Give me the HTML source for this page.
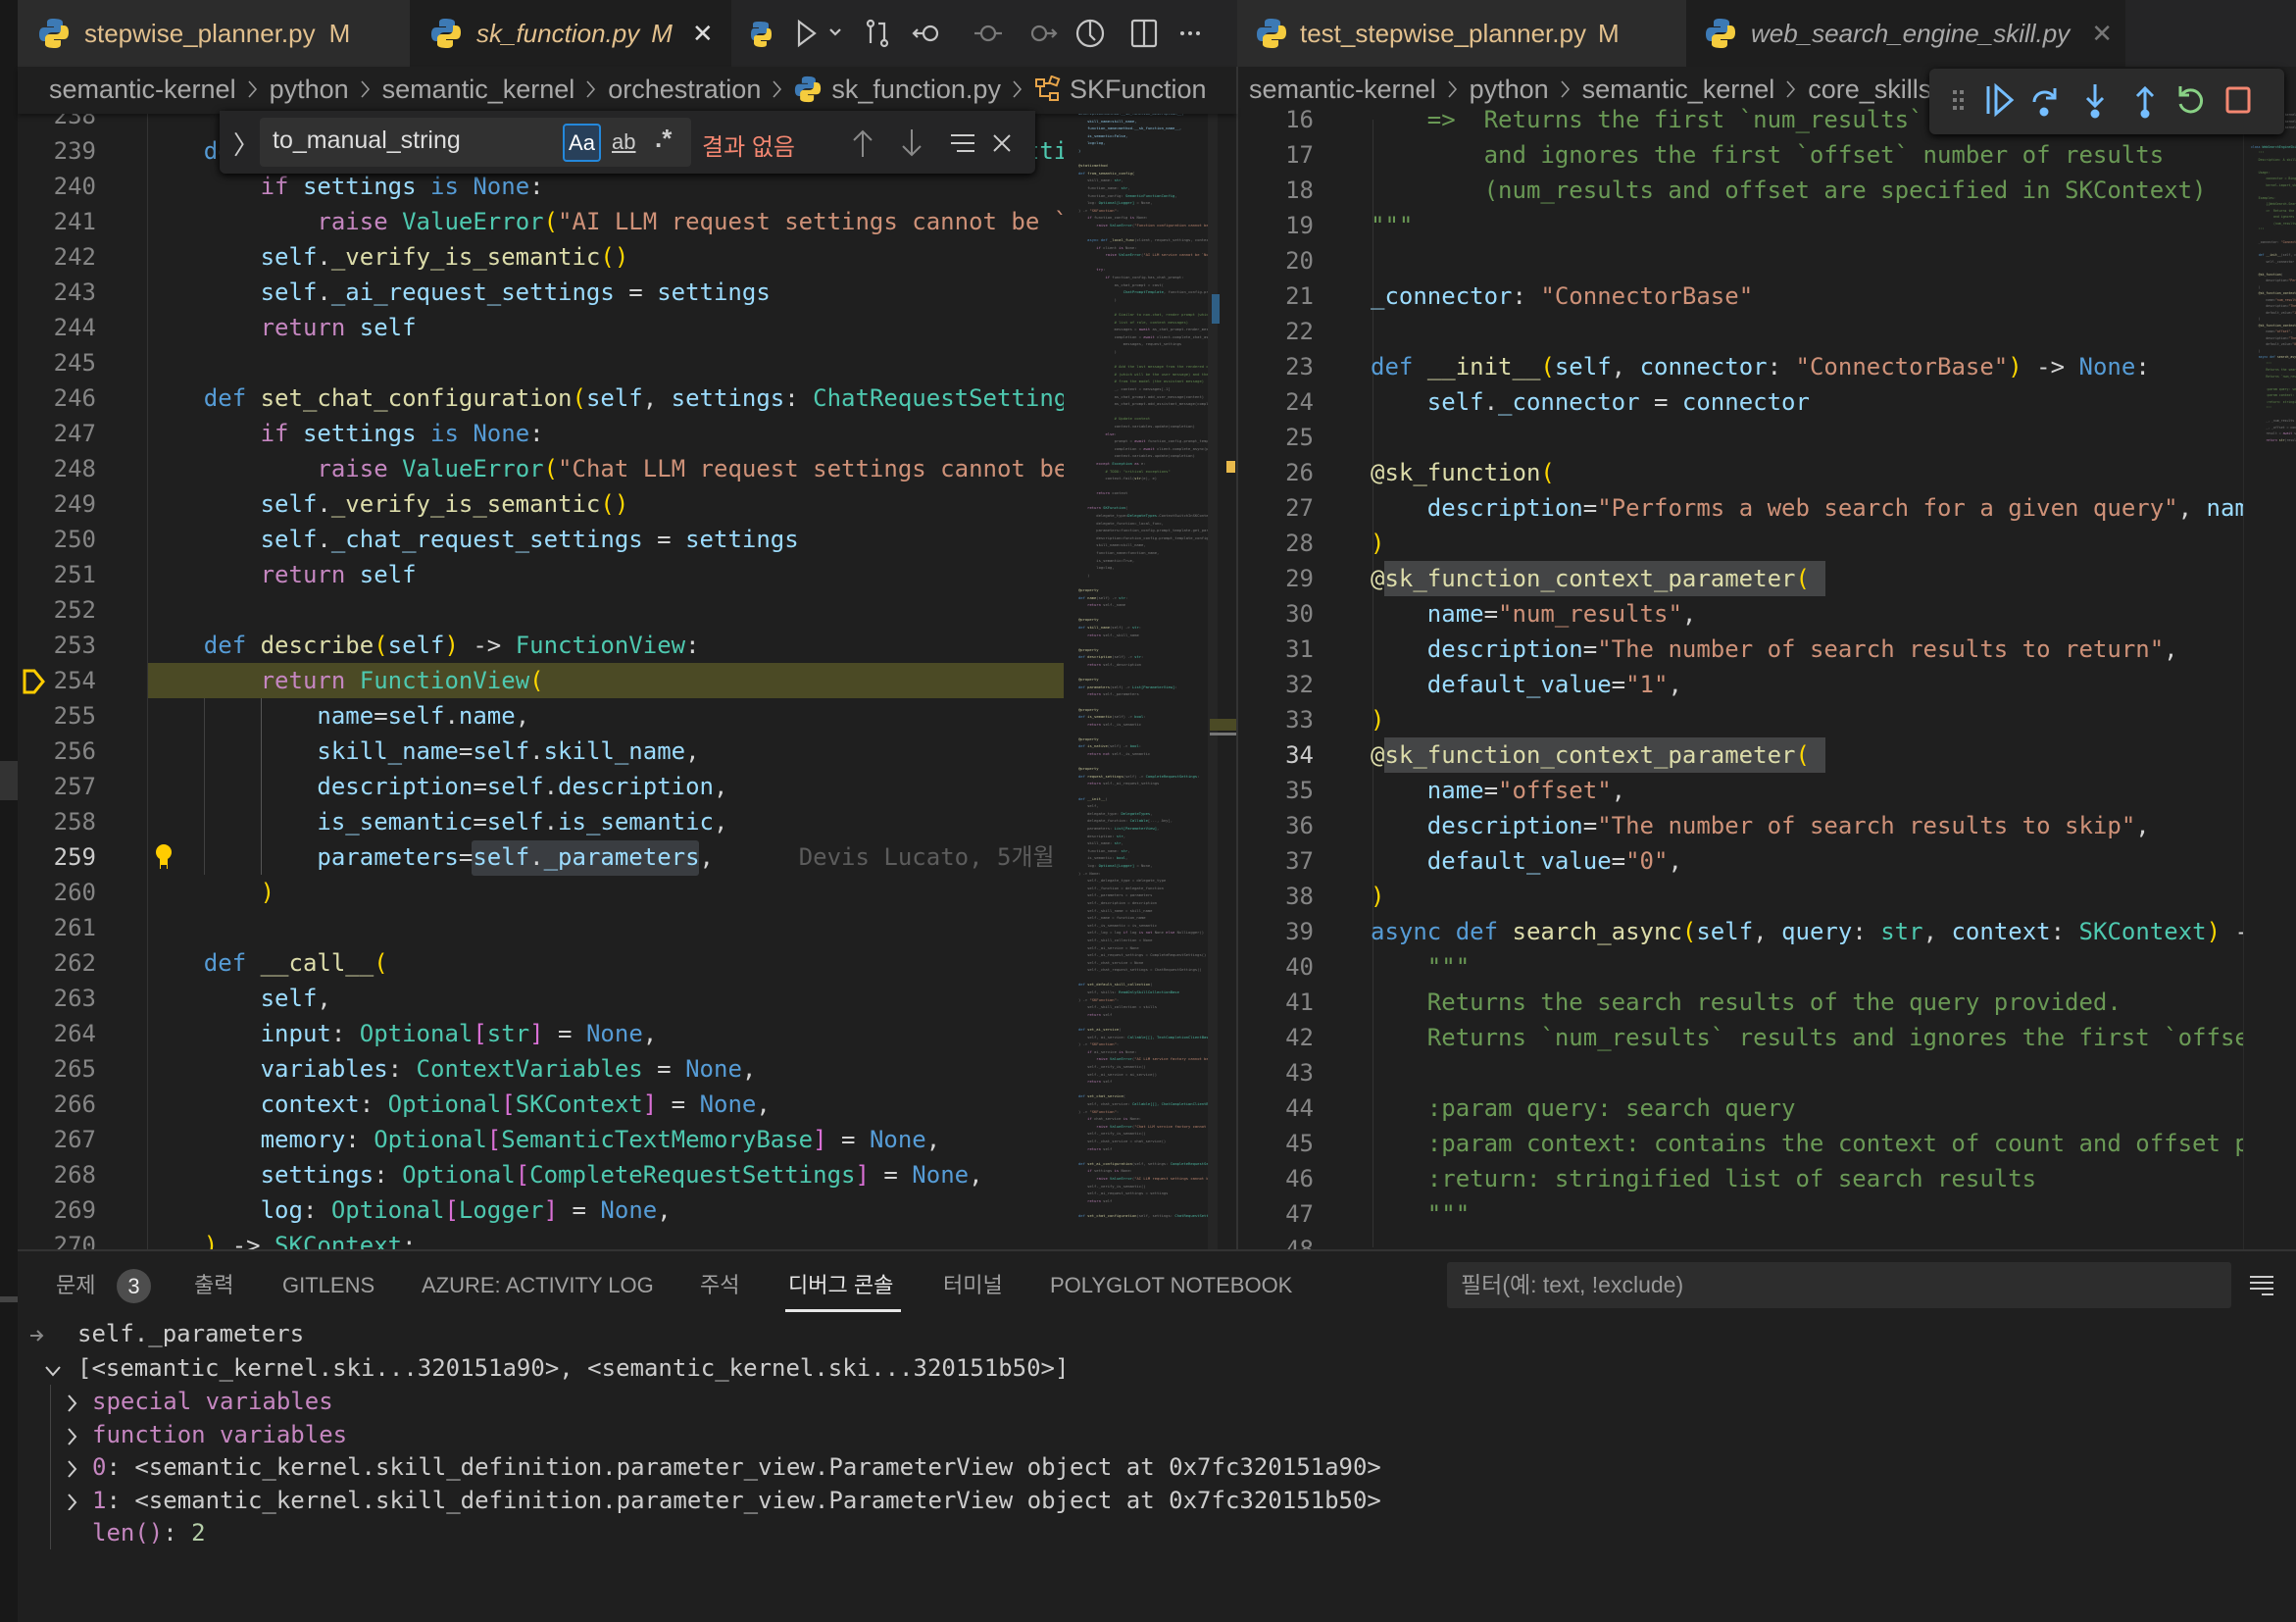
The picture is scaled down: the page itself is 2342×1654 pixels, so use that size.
<!DOCTYPE html>
<html><head><meta charset="utf-8">
<style>
*{margin:0;padding:0;box-sizing:border-box}
body{width:2342px;height:1654px;background:#1f1f1f;position:relative;overflow:hidden;font-family:"Liberation Sans","Noto Sans CJK KR",sans-serif;color:#ccc}
.abs{position:absolute}
.mono{font-family:"DejaVu Sans Mono","Liberation Mono",monospace;font-size:24px}
.code{position:absolute;white-space:pre;line-height:36px;color:#d4d4d4;overflow:hidden}
.nums{position:absolute;text-align:right;line-height:36px;color:#858585;white-space:pre}
.k{color:#569cd6}.c{color:#c586c0}.f{color:#dcdcaa}.t{color:#4ec9b0}.s{color:#ce9178}.v{color:#9cdcfe}.y{color:#ffd700}.m{color:#da70d6}.b{color:#179fff}.g{color:#6a9955}.n{color:#b5cea8}
.tab{position:absolute;top:0;height:68px;display:flex;align-items:center;font-size:26px}
.mini{position:absolute;white-space:pre;font-family:"DejaVu Sans Mono",monospace;font-size:3.8px;line-height:7.6px;color:#888;overflow:hidden;opacity:.85}
.sep{display:inline-block;width:12px;height:22px;margin:0 12px 0 10px;vertical-align:-2px}
.cl{position:absolute;white-space:pre;font-family:"DejaVu Sans Mono","Liberation Mono",monospace;font-size:24px;color:#ccc;line-height:30px}
</style></head><body>

<div class="abs" style="left:0;top:0;width:18px;height:1654px;background:#181818"></div>
<div class="abs" style="left:0;top:776px;width:18px;height:40px;background:#333"></div>

<!-- tab bar -->
<div class="abs" style="left:18px;top:0;width:2324px;height:68px;background:#252526"></div>
<div class="tab" style="left:18px;width:400px;background:#2c2c2c;color:#e2c08d">
  <svg style="margin-left:22px" width="30" height="32" viewBox="0 0 30 32"><path d="M14 1c-6 0-6 3-6 4v4h7v1H5c-3 0-5 2-5 7s2 7 5 7h3v-4c0-3 2-5 5-5h7c2 0 4-2 4-4V5c0-2-2-4-10-4z" fill="#3d7ab5"/><path d="M16 31c6 0 6-3 6-4v-4h-7v-1h10c3 0 5-2 5-7s-2-7-5-7h-3v4c0 3-2 5-5 5h-7c-2 0-4 2-4 4v6c0 2 2 4 10 4z" fill="#f5cc3e"/></svg>
  <span style="margin-left:16px">stepwise_planner.py</span><span style="margin-left:14px">M</span></div>
<div class="tab" style="left:418px;width:328px;background:#1e1e1e;color:#e2c08d;font-style:italic">
  <svg style="margin-left:22px" width="30" height="32" viewBox="0 0 30 32"><path d="M14 1c-6 0-6 3-6 4v4h7v1H5c-3 0-5 2-5 7s2 7 5 7h3v-4c0-3 2-5 5-5h7c2 0 4-2 4-4V5c0-2-2-4-10-4z" fill="#3d7ab5"/><path d="M16 31c6 0 6-3 6-4v-4h-7v-1h10c3 0 5-2 5-7s-2-7-5-7h-3v4c0 3-2 5-5 5h-7c-2 0-4 2-4 4v6c0 2 2 4 10 4z" fill="#f5cc3e"/></svg>
  <span style="margin-left:16px">sk_function.py</span><span style="margin-left:12px">M</span><span style="margin-left:20px;font-style:normal;color:#ddd">✕</span></div>
<svg class="abs" style="left:762px;top:16px" width="500" height="36" viewBox="0 0 500 36" fill="none" stroke="#c5c5c5" stroke-width="2.2">
  <path d="M7 2c-5 0-5 2-5 3v3h6v1H3c-2 0-3 2-3 6s1 6 3 6h2v-3c0-2 2-4 4-4h6c2 0 3-1 3-3V5c0-2-2-3-11-3z" fill="#3d7ab5" stroke="none" transform="translate(4,4)"/>
  <path d="M11 30c5 0 5-2 5-3v-3h-6v-1h8c2 0 3-2 3-6s-1-6-3-6h-2v3c0 2-2 4-4 4H6c-2 0-3 1-3 3v5c0 2 2 4 8 4z" fill="#f5cc3e" stroke="none" transform="translate(4,2)"/>
  <path d="M53 6l16 12-16 12z"/><path d="M85 14l5 5 5-5"/>
  <circle cx="126" cy="8" r="3"/><circle cx="140" cy="28" r="3"/><path d="M126 11v17M140 25V8h-6"/>
  <circle cx="187" cy="18" r="7"/><path d="M180 18h-10M174 14l-4 4 4 4"/>
  <g stroke="#7a7a7a"><circle cx="246" cy="18" r="7"/><path d="M232 18h7M253 18h7"/><circle cx="298" cy="18" r="7"/><path d="M305 18h10M311 14l4 4-4 4"/></g>
  <circle cx="350" cy="18" r="13"/><path d="M350 6v14l5 5"/>
  <rect x="393" y="5" width="24" height="26" rx="2"/><path d="M405 5v26"/>
  <g fill="#c5c5c5" stroke="none"><circle cx="444" cy="18" r="2"/><circle cx="452" cy="18" r="2"/><circle cx="460" cy="18" r="2"/></g>
</svg>
<div class="tab" style="left:1262px;width:458px;background:#2c2c2c;color:#e2c08d">
  <svg style="margin-left:20px" width="30" height="32" viewBox="0 0 30 32"><path d="M14 1c-6 0-6 3-6 4v4h7v1H5c-3 0-5 2-5 7s2 7 5 7h3v-4c0-3 2-5 5-5h7c2 0 4-2 4-4V5c0-2-2-4-10-4z" fill="#3d7ab5"/><path d="M16 31c6 0 6-3 6-4v-4h-7v-1h10c3 0 5-2 5-7s-2-7-5-7h-3v4c0 3-2 5-5 5h-7c-2 0-4 2-4 4v6c0 2 2 4 10 4z" fill="#f5cc3e"/></svg>
  <span style="margin-left:14px">test_stepwise_planner.py</span><span style="margin-left:12px">M</span></div>
<div class="tab" style="left:1720px;width:448px;background:#1e1e1e;color:#a8a8a8;font-style:italic">
  <svg style="margin-left:20px" width="30" height="32" viewBox="0 0 30 32"><path d="M14 1c-6 0-6 3-6 4v4h7v1H5c-3 0-5 2-5 7s2 7 5 7h3v-4c0-3 2-5 5-5h7c2 0 4-2 4-4V5c0-2-2-4-10-4z" fill="#3d7ab5"/><path d="M16 31c6 0 6-3 6-4v-4h-7v-1h10c3 0 5-2 5-7s-2-7-5-7h-3v4c0 3-2 5-5 5h-7c-2 0-4 2-4 4v6c0 2 2 4 10 4z" fill="#f5cc3e"/></svg>
  <span style="margin-left:16px">web_search_engine_skill.py</span><span style="margin-left:22px;font-style:normal;color:#777">✕</span></div>

<!-- left editor -->
<div class="abs" style="left:150px;top:676px;width:935px;height:36px;background:#4b4a25"></div>
<div class="abs" style="left:481px;top:857px;width:232px;height:36px;background:#3a3d41;border-radius:3px"></div>
<div class="abs" style="left:150px;top:110px;width:1px;height:1170px;background:#333"></div>
<div class="abs" style="left:208px;top:712px;width:1px;height:180px;background:#404040"></div>
<div class="abs" style="left:266px;top:712px;width:1px;height:180px;background:#555"></div>
<div class="nums mono" style="left:20px;top:100px;width:78px">238
239
240
241
242
243
244
245
246
247
248
249
250
251
252
253
254
255
256
257
258
<span style="color:#ccc">259</span>
260
261
262
263
264
265
266
267
268
269
270</div>
<svg class="abs" style="left:22px;top:682px" width="26" height="26" viewBox="0 0 26 26"><path d="M3 2h10l9 11-9 11H3z" fill="none" stroke="#ffcc00" stroke-width="3"/></svg>
<svg class="abs" style="left:157px;top:860px" width="20" height="30" viewBox="0 0 20 30"><circle cx="10" cy="9" r="8" fill="#ffcc00"/><rect x="6" y="14" width="8" height="12" fill="#ffcc00"/><rect x="7" y="22" width="6" height="6" fill="#1f1f1f"/></svg>
<div class="code mono" style="left:150px;top:100px;width:935px;height:1174px">
    <span class="k">def</span> <span class="f">set_ai_configuration</span><span class="y">(</span><span class="v">self</span>, <span class="v">settings</span>: <span class="t">CompleteRequestSettings</span><span class="y">)</span>:
        <span class="c">if</span> <span class="v">settings</span> <span class="k">is</span> <span class="k">None</span>:
            <span class="c">raise</span> <span class="t">ValueError</span><span class="y">(</span><span class="s">"AI LLM request settings cannot be `None`"</span><span class="y">)</span>
        <span class="v">self</span>.<span class="f">_verify_is_semantic</span><span class="y">()</span>
        <span class="v">self</span>.<span class="v">_ai_request_settings</span> = <span class="v">settings</span>
        <span class="c">return</span> <span class="v">self</span>

    <span class="k">def</span> <span class="f">set_chat_configuration</span><span class="y">(</span><span class="v">self</span>, <span class="v">settings</span>: <span class="t">ChatRequestSettings</span><span class="y">)</span>:
        <span class="c">if</span> <span class="v">settings</span> <span class="k">is</span> <span class="k">None</span>:
            <span class="c">raise</span> <span class="t">ValueError</span><span class="y">(</span><span class="s">"Chat LLM request settings cannot be `None`"</span><span class="y">)</span>
        <span class="v">self</span>.<span class="f">_verify_is_semantic</span><span class="y">()</span>
        <span class="v">self</span>.<span class="v">_chat_request_settings</span> = <span class="v">settings</span>
        <span class="c">return</span> <span class="v">self</span>

    <span class="k">def</span> <span class="f">describe</span><span class="y">(</span><span class="v">self</span><span class="y">)</span> -&gt; <span class="t">FunctionView</span>:
        <span class="c">return</span> <span class="t">FunctionView</span><span class="y">(</span>
            <span class="v">name</span>=<span class="v">self</span>.<span class="v">name</span>,
            <span class="v">skill_name</span>=<span class="v">self</span>.<span class="v">skill_name</span>,
            <span class="v">description</span>=<span class="v">self</span>.<span class="v">description</span>,
            <span class="v">is_semantic</span>=<span class="v">self</span>.<span class="v">is_semantic</span>,
            <span class="v">parameters</span>=<span class="v">self</span>.<span class="v">_parameters</span>,      <span style="color:#5c5c5c">Devis Lucato, 5개월 전</span>
        <span class="y">)</span>

    <span class="k">def</span> <span class="f">__call__</span><span class="y">(</span>
        <span class="v">self</span>,
        <span class="v">input</span>: <span class="t">Optional</span><span class="m">[</span><span class="t">str</span><span class="m">]</span> = <span class="k">None</span>,
        <span class="v">variables</span>: <span class="t">ContextVariables</span> = <span class="k">None</span>,
        <span class="v">context</span>: <span class="t">Optional</span><span class="m">[</span><span class="t">SKContext</span><span class="m">]</span> = <span class="k">None</span>,
        <span class="v">memory</span>: <span class="t">Optional</span><span class="m">[</span><span class="t">SemanticTextMemoryBase</span><span class="m">]</span> = <span class="k">None</span>,
        <span class="v">settings</span>: <span class="t">Optional</span><span class="m">[</span><span class="t">CompleteRequestSettings</span><span class="m">]</span> = <span class="k">None</span>,
        <span class="v">log</span>: <span class="t">Optional</span><span class="m">[</span><span class="t">Logger</span><span class="m">]</span> = <span class="k">None</span>,
    <span class="y">)</span> -&gt; <span class="t">SKContext</span>:</div>

<!-- left minimap -->
<div class="mini" style="left:1100px;top:112px;width:132px;height:1162px"><span class="v">description=method.__sk_function_description__,
    skill_name=skill_name,
    function_name=method.__sk_function_name__,
    is_semantic=False,
    log=log,
)</span>

<span class="f">@staticmethod</span>
<span class="k">def</span> <span class="f">from_semantic_config(</span>
    skill_name: <span class="t">str</span>,
    function_name: <span class="t">str</span>,
    function_config: <span class="t">SemanticFunctionConfig</span>,
    log: <span class="t">Optional[Logger]</span> = None,
) -&gt; <span class="s">"SKFunction"</span>:
    <span class="c">if</span> function_config <span class="c">is</span> None:
        <span class="c">raise</span> <span class="t">ValueError</span>(<span class="s">"Function configuration cannot be `None`"</span>)

    <span class="k">async def</span> <span class="f">_local_func</span>(client, request_settings, context):
        <span class="c">if</span> client <span class="c">is</span> None:
            <span class="c">raise</span> <span class="t">ValueError</span>(<span class="s">"AI LLM service cannot be `None`"</span>)

        <span class="c">try</span>:
            <span class="c">if</span> function_config.has_chat_prompt:
                as_chat_prompt = cast(
                    <span class="t">ChatPromptTemplate</span>, function_config.prompt_template
                )

                <span class="g"># Similar to non-chat, render prompt (which renders to a</span>
                <span class="g"># list of role, content messages)</span>
                messages = <span class="c">await</span> as_chat_prompt.render_messages_async(
                completion = <span class="c">await</span> client.complete_chat_async(
                    messages, request_settings
                )

                <span class="g"># Add the last message from the rendered chat prompt</span>
                <span class="g"># (which will be the user message) and the response</span>
                <span class="g"># from the model (the assistant message)</span>
                _, content = messages[-1]
                as_chat_prompt.add_user_message(content)
                as_chat_prompt.add_assistant_message(completion)

                <span class="g"># Update context</span>
                context.variables.update(completion)
            <span class="c">else</span>:
                prompt = <span class="c">await</span> function_config.prompt_template.render
                completion = <span class="c">await</span> client.complete_async(prompt,
                context.variables.update(completion)
        <span class="c">except</span> <span class="t">Exception</span> <span class="c">as</span> e:
            <span class="g"># TODO: "critical exceptions"</span>
            context.fail(<span class="f">str</span>(e), e)

        <span class="c">return</span> context

    <span class="c">return</span> <span class="t">SKFunction</span>(
        delegate_type=<span class="t">DelegateTypes</span>.ContextSwitchInSKContextOutTask,
        delegate_function=_local_func,
        parameters=function_config.prompt_template.get_parameters(),
        description=function_config.prompt_template_config.description,
        skill_name=skill_name,
        function_name=function_name,
        is_semantic=True,
        log=log,
    )

<span class="f">@property</span>
<span class="k">def</span> <span class="f">name</span>(self) -&gt; <span class="t">str</span>:
    <span class="c">return</span> self._name

<span class="f">@property</span>
<span class="k">def</span> <span class="f">skill_name</span>(self) -&gt; <span class="t">str</span>:
    <span class="c">return</span> self._skill_name

<span class="f">@property</span>
<span class="k">def</span> <span class="f">description</span>(self) -&gt; <span class="t">str</span>:
    <span class="c">return</span> self._description

<span class="f">@property</span>
<span class="k">def</span> <span class="f">parameters</span>(self) -&gt; <span class="t">List[ParameterView]</span>:
    <span class="c">return</span> self._parameters

<span class="f">@property</span>
<span class="k">def</span> <span class="f">is_semantic</span>(self) -&gt; <span class="t">bool</span>:
    <span class="c">return</span> self._is_semantic

<span class="f">@property</span>
<span class="k">def</span> <span class="f">is_native</span>(self) -&gt; <span class="t">bool</span>:
    <span class="c">return not</span> self._is_semantic

<span class="f">@property</span>
<span class="k">def</span> <span class="f">request_settings</span>(self) -&gt; <span class="t">CompleteRequestSettings</span>:
    <span class="c">return</span> self._ai_request_settings

<span class="k">def</span> <span class="f">__init__</span>(
    self,
    delegate_type: <span class="t">DelegateTypes</span>,
    delegate_function: <span class="t">Callable</span>[..., Any],
    parameters: <span class="t">List[ParameterView]</span>,
    description: <span class="t">str</span>,
    skill_name: <span class="t">str</span>,
    function_name: <span class="t">str</span>,
    is_semantic: <span class="t">bool</span>,
    log: <span class="t">Optional[Logger]</span> = None,
) -&gt; None:
    self._delegate_type = delegate_type
    self._function = delegate_function
    self._parameters = parameters
    self._description = description
    self._skill_name = skill_name
    self._name = function_name
    self._is_semantic = is_semantic
    self._log = log <span class="c">if</span> log <span class="c">is not</span> None <span class="c">else</span> NullLogger()
    self._skill_collection = None
    self._ai_service = None
    self._ai_request_settings = CompleteRequestSettings()
    self._chat_service = None
    self._chat_request_settings = ChatRequestSettings()

<span class="k">def</span> <span class="f">set_default_skill_collection</span>(
    self, skills: <span class="t">ReadOnlySkillCollectionBase</span>
) -&gt; <span class="s">"SKFunction"</span>:
    self._skill_collection = skills
    <span class="c">return</span> self

<span class="k">def</span> <span class="f">set_ai_service</span>(
    self, ai_service: <span class="t">Callable[[], TextCompletionClientBase]</span>
) -&gt; <span class="s">"SKFunction"</span>:
    <span class="c">if</span> ai_service <span class="c">is</span> None:
        <span class="c">raise</span> <span class="t">ValueError</span>(<span class="s">"AI LLM service factory cannot be `None`"</span>)
    self._verify_is_semantic()
    self._ai_service = ai_service()
    <span class="c">return</span> self

<span class="k">def</span> <span class="f">set_chat_service</span>(
    self, chat_service: <span class="t">Callable[[], ChatCompletionClientBase]</span>
) -&gt; <span class="s">"SKFunction"</span>:
    <span class="c">if</span> chat_service <span class="c">is</span> None:
        <span class="c">raise</span> <span class="t">ValueError</span>(<span class="s">"Chat LLM service factory cannot be `None`"</span>)
    self._verify_is_semantic()
    self._chat_service = chat_service()
    <span class="c">return</span> self

<span class="k">def</span> <span class="f">set_ai_configuration</span>(self, settings: <span class="t">CompleteRequestSettings</span>)
    <span class="c">if</span> settings <span class="c">is</span> None:
        <span class="c">raise</span> <span class="t">ValueError</span>(<span class="s">"AI LLM request settings cannot be `None`"</span>)
    self._verify_is_semantic()
    self._ai_request_settings = settings
    <span class="c">return</span> self

<span class="k">def</span> <span class="f">set_chat_configuration</span>(self, settings: <span class="t">ChatRequestSettings</span>) -</div>
<div class="abs" style="left:1232px;top:114px;width:10px;height:1160px;background:#262626"></div>
<div class="abs" style="left:1236px;top:300px;width:8px;height:30px;background:#2f5f85"></div>
<div class="abs" style="left:1251px;top:470px;width:9px;height:12px;background:#e8b94b"></div>
<div class="abs" style="left:1234px;top:733px;width:27px;height:12px;background:#4b4a25"></div>
<div class="abs" style="left:1234px;top:747px;width:27px;height:3px;background:#777"></div>
<div class="abs" style="left:1261px;top:68px;width:2px;height:1206px;background:#333"></div>

<!-- right editor -->
<div class="abs" style="left:1412px;top:572px;width:450px;height:36px;background:#444546"></div>
<div class="abs" style="left:1412px;top:752px;width:450px;height:36px;background:#444546"></div>
<div class="abs" style="left:1400px;top:122px;width:1px;height:1150px;background:#333"></div>
<div class="nums mono" style="left:1272px;top:104px;width:68px">16
17
18
19
20
21
22
23
24
25
26
27
28
29
30
31
32
33
<span style="color:#ccc">34</span>
35
36
37
38
39
40
41
42
43
44
45
46
47
48</div>
<div class="code mono" style="left:1398px;top:104px;width:890px;height:1170px"><span class="g">    =&gt;  Returns the first `num_results` results</span>
<span class="g">        and ignores the first `offset` number of results</span>
<span class="g">        (num_results and offset are specified in SKContext)</span>
<span class="g">"""</span>

<span class="v">_connector</span>: <span class="s">"ConnectorBase"</span>

<span class="k">def</span> <span class="f">__init__</span><span class="y">(</span><span class="v">self</span>, <span class="v">connector</span>: <span class="s">"ConnectorBase"</span><span class="y">)</span> -&gt; <span class="k">None</span>:
    <span class="v">self</span>.<span class="v">_connector</span> = <span class="v">connector</span>

<span class="f">@sk_function</span><span class="y">(</span>
    <span class="v">description</span>=<span class="s">"Performs a web search for a given query"</span>, <span class="v">name</span>=<span class="s">"searchAsync"</span>
<span class="y">)</span>
<span class="f">@sk_function_context_parameter</span><span class="y">(</span>
    <span class="v">name</span>=<span class="s">"num_results"</span>,
    <span class="v">description</span>=<span class="s">"The number of search results to return"</span>,
    <span class="v">default_value</span>=<span class="s">"1"</span>,
<span class="y">)</span>
<span class="f">@sk_function_context_parameter</span><span class="y">(</span>
    <span class="v">name</span>=<span class="s">"offset"</span>,
    <span class="v">description</span>=<span class="s">"The number of search results to skip"</span>,
    <span class="v">default_value</span>=<span class="s">"0"</span>,
<span class="y">)</span>
<span class="k">async</span> <span class="k">def</span> <span class="f">search_async</span><span class="y">(</span><span class="v">self</span>, <span class="v">query</span>: <span class="t">str</span>, <span class="v">context</span>: <span class="t">SKContext</span><span class="y">)</span> -&gt; <span class="t">str</span>:
<span class="g">    """</span>
<span class="g">    Returns the search results of the query provided.</span>
<span class="g">    Returns `num_results` results and ignores the first `offset`.</span>

<span class="g">    :param query: search query</span>
<span class="g">    :param context: contains the context of count and offset parameters</span>
<span class="g">    :return: stringified list of search results</span>
<span class="g">    """</span>
</div>
<div class="mini" style="left:2296px;top:114px;width:46px;height:1160px;font-size:3.2px;line-height:6.5px">    <span class="k">from</span> semantic_kernel.connectors
    <span class="k">from</span> semantic_kernel.orch
    <span class="k">from</span> semantic_kernel.skill


<span class="k">class</span> <span class="t">WebSearchEngineSkill</span>:
    <span class="g">"""</span>
<span class="g">    Description: A skill that provides web</span>

<span class="g">    Usage:</span>
<span class="g">        connector = BingConnector(bing_se</span>
<span class="g">        kernel.import_skill(WebSearchEn</span>

<span class="g">    Examples:</span>
<span class="g">        {{WebSearch.SearchAsync "What is</span>
<span class="g">        =&gt;  Returns the first `num_resul</span>
<span class="g">            and ignores the first `offs</span>
<span class="g">            (num_results and offset are</span>
<span class="g">    """</span>

    _connector: <span class="s">"ConnectorBase"</span>

    <span class="k">def</span> <span class="f">__init__</span>(self, connector: <span class="s">"C</span>
        self._connector = connector

    <span class="f">@sk_function</span>(
        description=<span class="s">"Performs a web</span>
    )
    <span class="f">@sk_function_context_parameter</span>(
        name=<span class="s">"num_results"</span>,
        description=<span class="s">"The number</span>
        default_value=<span class="s">"1"</span>,
    )
    <span class="f">@sk_function_context_parameter</span>(
        name=<span class="s">"offset"</span>,
        description=<span class="s">"The number</span>
        default_value=<span class="s">"0"</span>,
    )
    <span class="k">async def</span> <span class="f">search_async</span>(self, q
        <span class="g">"""</span>
<span class="g">        Returns the search results</span>
<span class="g">        Returns `num_results` resul</span>

<span class="g">        :param query: search query</span>
<span class="g">        :param context: contains th</span>
<span class="g">        :return: stringified list o</span>
<span class="g">        """</span>

        _, _num_results = context.va
        _, _offset = context.variabl
        result = <span class="c">await</span> self._connect
        <span class="c">return</span> <span class="f">str</span>(result)</div>
<div class="abs" style="left:2288px;top:114px;width:1px;height:1160px;background:#2a2a2a"></div>

<!-- breadcrumbs -->
<div class="abs" style="left:18px;top:68px;width:1243px;height:48px;background:#1f1f1f;box-shadow:0 3px 4px rgba(0,0,0,.35)"></div>
<div class="abs" style="left:1263px;top:68px;width:1079px;height:42px;background:#1f1f1f"></div>
<div class="abs" style="left:1261px;top:68px;width:2px;height:48px;background:#333"></div>
<div class="abs" style="left:50px;top:73px;font-size:27px;color:#a9a9a9;white-space:nowrap;line-height:36px">semantic-kernel<svg class="sep" viewBox="0 0 12 22"><path d="M3 3l7 8-7 8" fill="none" stroke="#999" stroke-width="1.6"/></svg>python<svg class="sep" viewBox="0 0 12 22"><path d="M3 3l7 8-7 8" fill="none" stroke="#999" stroke-width="1.6"/></svg>semantic_kernel<svg class="sep" viewBox="0 0 12 22"><path d="M3 3l7 8-7 8" fill="none" stroke="#999" stroke-width="1.6"/></svg>orchestration<svg class="sep" viewBox="0 0 12 22"><path d="M3 3l7 8-7 8" fill="none" stroke="#999" stroke-width="1.6"/></svg><svg width="28" height="28" viewBox="0 0 30 32" style="vertical-align:-5px;margin-right:10px"><path d="M14 1c-6 0-6 3-6 4v4h7v1H5c-3 0-5 2-5 7s2 7 5 7h3v-4c0-3 2-5 5-5h7c2 0 4-2 4-4V5c0-2-2-4-10-4z" fill="#3d7ab5"/><path d="M16 31c6 0 6-3 6-4v-4h-7v-1h10c3 0 5-2 5-7s-2-7-5-7h-3v4c0 3-2 5-5 5h-7c-2 0-4 2-4 4v6c0 2 2 4 10 4z" fill="#f5cc3e"/></svg>sk_function.py<svg class="sep" viewBox="0 0 12 22"><path d="M3 3l7 8-7 8" fill="none" stroke="#999" stroke-width="1.6"/></svg><svg width="28" height="28" viewBox="0 0 28 28" style="vertical-align:-5px;margin-right:8px" fill="none" stroke="#e8a54a" stroke-width="2"><rect x="2" y="4" width="8" height="7"/><rect x="16" y="2" width="8" height="7" transform="rotate(20 20 6)"/><rect x="16" y="18" width="8" height="7"/><path d="M10 8h6M6 11v10h10"/></svg>SKFunction</div>
<div class="abs" style="left:1274px;top:73px;font-size:27px;color:#a9a9a9;white-space:nowrap;line-height:36px">semantic-kernel<svg class="sep" viewBox="0 0 12 22"><path d="M3 3l7 8-7 8" fill="none" stroke="#999" stroke-width="1.6"/></svg>python<svg class="sep" viewBox="0 0 12 22"><path d="M3 3l7 8-7 8" fill="none" stroke="#999" stroke-width="1.6"/></svg>semantic_kernel<svg class="sep" viewBox="0 0 12 22"><path d="M3 3l7 8-7 8" fill="none" stroke="#999" stroke-width="1.6"/></svg>core_skills</div>

<!-- find widget -->
<div class="abs" style="left:224px;top:113px;width:832px;height:64px;background:#252526;box-shadow:0 2px 8px #000;border-radius:0 0 6px 6px"></div>
<div class="abs" style="left:238px;top:128px;font-size:26px;color:#ccc">〉</div>
<div class="abs" style="left:265px;top:120px;width:440px;height:50px;background:#313131;border-radius:4px"></div>
<div class="abs" style="left:278px;top:129px;font-size:25px;color:#ddd">to_manual_string</div>
<div class="abs" style="left:574px;top:126px;width:39px;height:39px;border:2px solid #2488db;background:#28405a;border-radius:4px;font-size:22px;color:#fff;text-align:center;line-height:35px">Aa</div>
<div class="abs" style="left:624px;top:132px;font-size:22px;color:#ccc;text-decoration:underline">ab</div>
<div class="abs" style="left:668px;top:126px;font-size:26px;color:#ccc;font-weight:bold">.*</div>
<div class="abs" style="left:716px;top:130px;font-size:24px;color:#f48771">결과 없음</div>
<svg class="abs" style="left:866px;top:130px" width="180" height="32" viewBox="0 0 180 32" fill="none" stroke="#8a8a8a" stroke-width="2"><path d="M14 4v26M5 13l9-9 9 9"/><path d="M64 2v26M55 19l9 9 9-9" /><path d="M104 8h24M104 16h24M110 24h18" stroke="#ccc"/><path d="M148 8l16 16M164 8l-16 16" stroke="#ccc"/></svg>

<!-- debug toolbar -->
<div class="abs" style="left:1968px;top:70px;width:362px;height:67px;background:#2b2b2b;border-radius:6px;box-shadow:0 2px 8px #000"></div>
<svg class="abs" style="left:1990px;top:82px" width="330" height="42" viewBox="0 0 330 42" fill="none" stroke-width="3">
  <g fill="#7a7a7a"><rect x="2" y="10" width="4" height="4"/><rect x="9" y="10" width="4" height="4"/><rect x="2" y="18" width="4" height="4"/><rect x="9" y="18" width="4" height="4"/><rect x="2" y="26" width="4" height="4"/><rect x="9" y="26" width="4" height="4"/></g>
  <g stroke="#75beff"><path d="M38 6v28"/><path d="M46 6l16 14-16 14z"/>
  <path d="M85 22c0-10 14-14 20-5M106 8v10h-9"/><circle cx="95" cy="32" r="3" fill="#75beff"/>
  <path d="M147 4v22M139 18l8 8 8-8"/><circle cx="147" cy="34" r="3" fill="#75beff"/>
  <path d="M198 8v22M190 16l8-8 8 8"/><circle cx="198" cy="34" r="3" fill="#75beff"/></g>
  <path d="M236 14a11 11 0 1 1 -2 10M234 6v9h9" stroke="#89d185"/>
  <rect x="282" y="8" width="22" height="24" rx="2" stroke="#f48771"/>
</svg>

<!-- panel -->
<div class="abs" style="left:18px;top:1274px;width:2324px;height:380px;background:#1f1f1f;border-top:2px solid #333"></div>
<div class="abs" style="left:0;top:1322px;width:18px;height:6px;background:#444"></div>
<div class="abs" style="left:0;top:1296px;font-size:22px;color:#a0a0a0;white-space:nowrap;line-height:30px">
 <span class="abs" style="left:57px">문제</span>
 <span class="abs" style="left:119px;top:-2px;width:35px;height:35px;border-radius:18px;background:#4d4d4d;color:#eee;text-align:center;line-height:35px">3</span>
 <span class="abs" style="left:198px">출력</span>
 <span class="abs" style="left:288px">GITLENS</span>
 <span class="abs" style="left:430px">AZURE: ACTIVITY LOG</span>
 <span class="abs" style="left:714px">주석</span>
 <span class="abs" style="left:804px;color:#e7e7e7">디버그 콘솔</span>
 <span class="abs" style="left:962px">터미널</span>
 <span class="abs" style="left:1071px">POLYGLOT NOTEBOOK</span>
</div>
<div class="abs" style="left:801px;top:1335px;width:118px;height:3px;background:#e7e7e7"></div>
<div class="abs" style="left:1476px;top:1287px;width:800px;height:47px;background:#2d2d2d;border-radius:3px;font-size:23px;color:#999;line-height:47px;padding-left:14px">필터(예: text, !exclude)</div>
<svg class="abs" style="left:2293px;top:1298px" width="28" height="24" viewBox="0 0 28 24" stroke="#ccc" stroke-width="2"><path d="M2 4h24M2 10h24M2 16h24M14 22h12"/></svg>

<div class="abs" style="left:51px;top:1412px;width:1px;height:168px;background:#444"></div>
<svg class="abs" style="left:28px;top:1352px" width="20" height="20" viewBox="0 0 20 20" fill="none" stroke="#888" stroke-width="2"><path d="M3 10h12M10 5l5 5-5 5"/></svg>
<div class="cl" style="left:79px;top:1345px">self._parameters</div>
<svg class="abs" style="left:44px;top:1388px" width="20" height="20" viewBox="0 0 20 20" fill="none" stroke="#ccc" stroke-width="2"><path d="M3 6l7 8 7-8"/></svg>
<div class="cl" style="left:79px;top:1380px">[&lt;semantic_kernel.ski...320151a90&gt;, &lt;semantic_kernel.ski...320151b50&gt;]</div>
<svg class="abs" style="left:64px;top:1420px" width="20" height="120" viewBox="0 0 20 120" fill="none" stroke="#ccc" stroke-width="2"><path d="M6 3l7 8-7 8M6 37l7 8-7 8M6 70l7 8-7 8M6 104l7 8-7 8"/></svg>
<div class="cl" style="left:94px;top:1414px;color:#c586c0">special variables</div>
<div class="cl" style="left:94px;top:1448px;color:#c586c0">function variables</div>
<div class="cl" style="left:94px;top:1481px"><span style="color:#c586c0">0</span>: &lt;semantic_kernel.skill_definition.parameter_view.ParameterView object at 0x7fc320151a90&gt;</div>
<div class="cl" style="left:94px;top:1515px"><span style="color:#c586c0">1</span>: &lt;semantic_kernel.skill_definition.parameter_view.ParameterView object at 0x7fc320151b50&gt;</div>
<div class="cl" style="left:94px;top:1548px"><span style="color:#c586c0">len()</span>: <span style="color:#b5cea8">2</span></div>
</body></html>
